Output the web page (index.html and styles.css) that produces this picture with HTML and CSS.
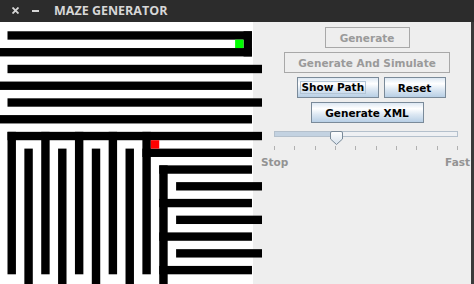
FILE: index.html
```html
<!DOCTYPE html>
<html lang="en">
<head>
  <meta charset="UTF-8" />
  <title>Maze Generator</title>
  <link rel="stylesheet" href="styles.css">
</head>
<body>
  <div class="titlebar">
    <svg class="win-close" width="7" height="7" viewBox="0 0 7 7"><path d="M0.5 0.5 L6.5 6.5 M6.5 0.5 L0.5 6.5" /></svg>
    <svg class="win-min" width="7" height="2" viewBox="0 0 7 2"><rect width="7" height="2" /></svg>
    <span class="title">MAZE GENERATOR</span>
  </div>

  <div class="main">
    <svg class="maze" width="262" height="262">
      <rect class="floor" x="0" y="0" width="253" height="262" />
      <g transform="translate(-0.93 0.9) scale(8.43 8.38)">
        <!-- upper corridors -->
        <rect x="1" y="1" width="29" height="1" />
        <rect x="29" y="1" width="1" height="3" />
        <rect x="0" y="3" width="30" height="1" />
        <rect x="1" y="5" width="30.2" height="1" />
        <rect x="0" y="7" width="30" height="1" />
        <rect x="1" y="9" width="30.2" height="1" />
        <rect x="0" y="11" width="30" height="1" />
        <rect x="1" y="13" width="30.2" height="1" />
        <!-- comb on the left -->
        <rect x="1" y="13" width="1" height="17" />
        <rect x="5" y="13" width="1" height="17" />
        <rect x="9" y="13" width="1" height="17" />
        <rect x="13" y="13" width="1" height="17" />
        <rect x="17" y="13" width="1" height="17" />
        <rect x="3" y="15" width="1" height="20" />
        <rect x="7" y="15" width="1" height="20" />
        <rect x="11" y="15" width="1" height="20" />
        <rect x="15" y="15" width="1" height="20" />
        <!-- right side -->
        <rect x="17" y="15" width="13" height="1" />
        <rect x="19" y="17" width="1" height="20" />
        <rect x="19" y="17" width="11" height="1" />
        <rect x="21" y="19" width="10.2" height="1" />
        <rect x="19" y="21" width="11" height="1" />
        <rect x="21" y="23" width="10.2" height="1" />
        <rect x="19" y="25" width="11" height="1" />
        <rect x="21" y="27" width="10.2" height="1" />
        <rect x="19" y="29" width="11" height="1" />
        <rect class="goal" x="28" y="2" width="1" height="1" />
        <rect class="start" x="18" y="14" width="1" height="1" />
      </g>
    </svg>

    <div class="controls">
      <button class="btn btn-generate" disabled>Generate</button>
      <button class="btn btn-simulate" disabled>Generate And Simulate</button>
      <div class="btn-row">
        <button class="btn btn-path"><span class="focus">Show Path</span></button>
        <button class="btn btn-reset">Reset</button>
      </div>
      <button class="btn btn-xml">Generate XML</button>

      <div class="slider">
        <div class="track-wrap">
          <div class="track"><div class="track-fill"></div></div>
          <svg class="thumb" width="13" height="14" viewBox="0 0 13 14">
            <defs>
              <linearGradient id="thumbGrad" x1="0" y1="0" x2="0" y2="1">
                <stop offset="0" stop-color="#ffffff" />
                <stop offset="1" stop-color="#d6e1ec" />
              </linearGradient>
            </defs>
            <path d="M2 0.5 H11 Q12.5 0.5 12.5 2 V8 L6.5 13.5 L0.5 8 V2 Q0.5 0.5 2 0.5 Z" />
          </svg>
        </div>
        <div class="ticks">
          <i></i><i></i><i></i><i></i><i></i><i></i><i></i><i></i><i></i><i></i>
        </div>
        <div class="tick-labels">
          <span>Stop</span>
          <span>Fast</span>
        </div>
      </div>
    </div>
  </div>
</body>
</html>
```

FILE: styles.css
```css
* {
  box-sizing: border-box;
}
body {
  margin: 0;
  width: 474px;
  height: 284px;
  overflow: hidden;
  background: #eeeeee;
  font-family: "DejaVu Sans", sans-serif;
}

.titlebar {
  height: 22px;
  background: #2c2c2c;
  display: flex;
  align-items: center;
  color: #d7d7d7;
}
.win-close {
  margin-left: 12px;
  margin-top: -1px;
  stroke: #d7d7d7;
  stroke-width: 1.8;
}
.win-min {
  margin-left: 13px;
  fill: #d7d7d7;
}
.title {
  margin-left: 15px;
  font-family: "Open Sans", sans-serif;
  font-weight: bold;
  font-size: 12.5px;
  margin-top: -1px;
}

.main {
  display: flex;
  height: 262px;
  border-right: 3px solid #3a3a3a;
}
.maze {
  flex: none;
  display: block;
}
.maze rect {
  fill: #000;
}
.maze .floor {
  fill: #fff;
}
.maze .goal {
  fill: #00ff00;
}
.maze .start {
  fill: #ff0000;
}

.controls {
  flex: 1;
  display: flex;
  flex-direction: column;
  align-items: center;
  padding-top: 5px;
  gap: 4px;
}
.btn {
  height: 21px;
  padding: 0;
  font-family: "DejaVu Sans", sans-serif;
  font-weight: bold;
  font-size: 10.5px;
  color: #000;
  border: 1px solid #7a8a99;
  border-radius: 0;
  background: linear-gradient(#dde8f3 0%, #ffffff 30%, #dde8f3 60%, #b8cfe5 100%);
  display: flex;
  align-items: center;
  justify-content: center;
}
.btn:disabled {
  color: #9a9a9a;
  border-color: #a8a8a8;
  background: #eeeeee;
}
.btn-generate { width: 85px; }
.btn-simulate { width: 166px; }
.btn-path {
  width: 82px;
  justify-content: flex-start;
  padding-left: 2px;
}
.btn-reset { width: 62px; }
.btn-xml { width: 113px; }

.btn-row {
  display: flex;
  gap: 5px;
  margin-left: 8px;
}
.focus {
  border: 1px solid #b3c5d6;
  padding: 0 1px;
  line-height: 11px;
}

.slider {
  align-self: stretch;
  padding: 0 14px 0 12px;
}
.track-wrap {
  position: relative;
  height: 14px;
  margin-top: 3px;
}
.track {
  margin-top: 4px;
  height: 6px;
  border: 1px solid #b4c0cc;
  background: #eef0f3;
}
.track-fill {
  width: 62px;
  height: 100%;
  background: #c3d2e1;
}
.thumb {
  position: absolute;
  left: 56px;
  top: 0;
  fill: url(#thumbGrad);
  stroke: #7a8a99;
  stroke-width: 1;
}
.ticks {
  display: flex;
  justify-content: space-between;
  width: 184px;
  height: 4px;
  margin-top: 1px;
}
.ticks i {
  width: 1px;
  background: #b0b0b0;
}
.tick-labels {
  display: flex;
  justify-content: space-between;
  margin: 6px -12px 0 -13px;
  font-weight: bold;
  font-size: 10.5px;
  line-height: 12px;
  color: #939393;
}
```
